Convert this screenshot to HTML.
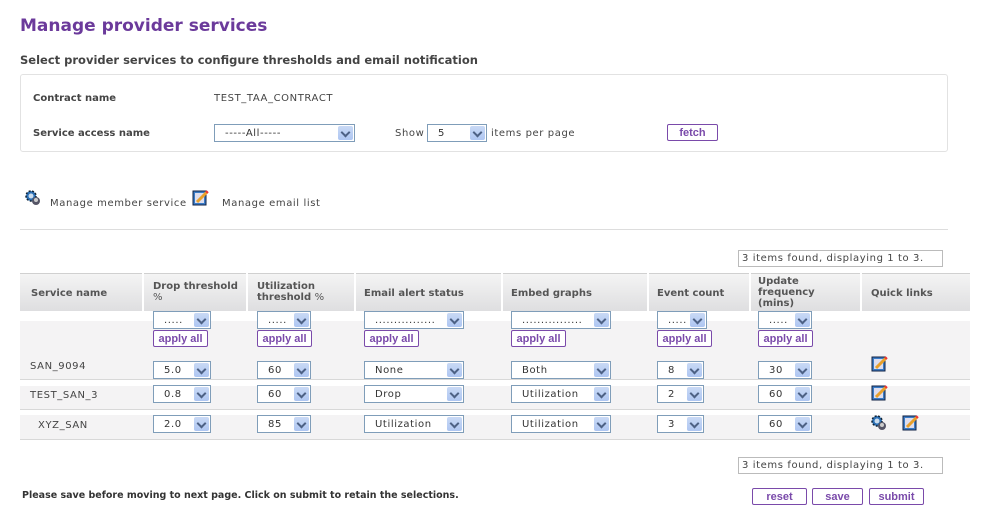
<!DOCTYPE html>
<html><head><style>
*{box-sizing:border-box;margin:0;padding:0}
body{width:989px;height:522px;background:#fff;font-family:"DejaVu Sans","Liberation Sans",sans-serif;font-size:10px;color:#444;position:relative;overflow:hidden;letter-spacing:.6px}
.a{position:absolute;white-space:nowrap}
.sel{position:absolute;height:18px;border:1px solid #7f9db9;background:#fff;font-size:10px;color:#333;line-height:17px;padding-left:10px}
.sel i{position:absolute;right:1px;top:1px;width:15px;height:14px;background:linear-gradient(#c9d9f5,#aec6f2);border-radius:2px}
.sel i:after{content:"";position:absolute;left:4px;top:3px;width:5px;height:5px;border-right:2px solid #4d6185;border-bottom:2px solid #4d6185;transform:rotate(45deg)}
.btn{position:absolute;height:17px;border:1px solid #7a4aaa;border-radius:2px;background:#fff;color:#7a4aaa;font-weight:bold;font-size:11px;text-align:center;line-height:16px;font-family:"Liberation Sans",sans-serif;letter-spacing:0}
.b{font-weight:bold;letter-spacing:0}
.hd{position:absolute;top:273px;height:38px;background:linear-gradient(#f4f4f4,#dedee0);border-top:1px solid #d0d0d0}
.th{position:absolute;font-weight:bold;color:#555;font-size:10px;line-height:11px;letter-spacing:0}
.ic{position:absolute;width:17px;height:17px}
</style></head><body>
<div class="a" style="left:20px;top:16px;font-size:17px;font-weight:bold;color:#6b3a9b;letter-spacing:0">Manage provider services</div>
<div class="a" style="left:20px;top:53px;font-size:11.5px;font-weight:bold;color:#444;letter-spacing:0">Select provider services to configure thresholds and email notification</div>
<div class="a" style="left:20px;top:74px;width:928px;height:78px;border:1px solid #e2e2e2;border-radius:3px"></div>
<div class="a b" style="left:33px;top:93px;color:#444">Contract name</div>
<div class="a" style="left:214px;top:93px;color:#444">TEST_TAA_CONTRACT</div>
<div class="a b" style="left:33px;top:128px;color:#444">Service access name</div>
<div class="sel" style="left:214px;top:124px;width:141px">-----All-----<i></i></div>
<div class="a" style="left:395px;top:128px">Show</div>
<div class="sel" style="left:427px;top:124px;width:60px">5<i></i></div>
<div class="a" style="left:491px;top:128px">items per page</div>
<div class="btn" style="left:667px;top:124px;width:51px">fetch</div>

<svg class="ic" style="left:24px;top:189px" viewBox="0 0 17 17"><circle cx="7" cy="7" r="5" fill="#2a6fb5" stroke="#123" stroke-width="1.5" stroke-dasharray="2 1.5"/><circle cx="7" cy="7" r="2.5" fill="#cde"/><circle cx="12" cy="12" r="4" fill="#556"/><circle cx="12" cy="11" r="2" fill="#ccc"/></svg>
<div class="a" style="left:50px;top:198px">Manage member service</div>
<svg class="ic" style="left:192px;top:189px" viewBox="0 0 17 17"><rect x="1" y="2" width="13" height="14" fill="#3a7cc7" stroke="#124" /><rect x="3" y="4" width="9" height="10" fill="#dde"/><path d="M5 13 L15 3" stroke="#e8a02a" stroke-width="3"/><path d="M14 2l2 2" stroke="#e33" stroke-width="2"/></svg>
<div class="a" style="left:222px;top:198px">Manage email list</div>
<div class="a" style="left:20px;top:229px;width:928px;height:1px;background:#ddd"></div>

<div class="a" style="left:738px;top:250px;width:205px;height:17px;border:1px solid #bbb;line-height:16px;padding-left:3px">3 items found, displaying 1 to 3.</div>

<div class="hd" style="left:20px;width:122px"></div>
<div class="hd" style="left:144px;width:102px"></div>
<div class="hd" style="left:248px;width:106px"></div>
<div class="hd" style="left:356px;width:145px"></div>
<div class="hd" style="left:503px;width:144px"></div>
<div class="hd" style="left:649px;width:100px"></div>
<div class="hd" style="left:751px;width:109px"></div>
<div class="hd" style="left:862px;width:108px"></div>
<div class="th" style="left:31px;top:288px">Service name</div>
<div class="th" style="left:153px;top:281px">Drop threshold<br><span style="font-weight:normal">%</span></div>
<div class="th" style="left:257px;top:281px">Utilization<br>threshold <span style="font-weight:normal">%</span></div>
<div class="th" style="left:364px;top:288px">Email alert status</div>
<div class="th" style="left:511px;top:288px">Embed graphs</div>
<div class="th" style="left:657px;top:288px">Event count</div>
<div class="th" style="left:758px;top:276px">Update<br>frequency<br>(mins)</div>
<div class="th" style="left:871px;top:288px">Quick links</div>

<div class="a" style="left:20px;top:321px;width:950px;height:34px;background:#f4f3f4"></div>
<div class="a" style="left:20px;top:355px;width:950px;height:24px;background:#f4f3f4"></div>
<div class="a" style="left:20px;top:379px;width:950px;height:1px;background:#d8d8d8"></div>
<div class="a" style="left:20px;top:386px;width:950px;height:23px;background:#f4f3f4"></div>
<div class="a" style="left:20px;top:409px;width:950px;height:1px;background:#d8d8d8"></div>
<div class="a" style="left:20px;top:415px;width:950px;height:24px;background:#f4f3f4"></div>
<div class="a" style="left:20px;top:439px;width:950px;height:1px;background:#d8d8d8"></div>

<div class="sel" style="left:153px;top:311px;width:58px">.....<i></i></div>
<div class="sel" style="left:257px;top:311px;width:54px">.....<i></i></div>
<div class="sel" style="left:364px;top:311px;width:100px">................<i></i></div>
<div class="sel" style="left:511px;top:311px;width:100px">................<i></i></div>
<div class="sel" style="left:657px;top:311px;width:50px">.....<i></i></div>
<div class="sel" style="left:758px;top:311px;width:54px">.....<i></i></div>
<div class="btn" style="left:153px;top:330px;width:55px">apply all</div>
<div class="btn" style="left:257px;top:330px;width:55px">apply all</div>
<div class="btn" style="left:364px;top:330px;width:55px">apply all</div>
<div class="btn" style="left:511px;top:330px;width:55px">apply all</div>
<div class="btn" style="left:657px;top:330px;width:55px">apply all</div>
<div class="btn" style="left:758px;top:330px;width:55px">apply all</div>

<div class="a" style="left:30px;top:361px">SAN_9094</div>
<div class="a" style="left:30px;top:390px">TEST_SAN_3</div>
<div class="a" style="left:38px;top:420px">XYZ_SAN</div>

<div class="sel" style="left:153px;top:361px;width:58px">5.0<i></i></div>
<div class="sel" style="left:257px;top:361px;width:54px">60<i></i></div>
<div class="sel" style="left:364px;top:361px;width:100px">None<i></i></div>
<div class="sel" style="left:511px;top:361px;width:100px">Both<i></i></div>
<div class="sel" style="left:657px;top:361px;width:47px">8<i></i></div>
<div class="sel" style="left:758px;top:361px;width:54px">30<i></i></div>

<div class="sel" style="left:153px;top:385px;width:58px">0.8<i></i></div>
<div class="sel" style="left:257px;top:385px;width:54px">60<i></i></div>
<div class="sel" style="left:364px;top:385px;width:100px">Drop<i></i></div>
<div class="sel" style="left:511px;top:385px;width:100px">Utilization<i></i></div>
<div class="sel" style="left:657px;top:385px;width:47px">2<i></i></div>
<div class="sel" style="left:758px;top:385px;width:54px">60<i></i></div>

<div class="sel" style="left:153px;top:415px;width:58px">2.0<i></i></div>
<div class="sel" style="left:257px;top:415px;width:54px">85<i></i></div>
<div class="sel" style="left:364px;top:415px;width:100px">Utilization<i></i></div>
<div class="sel" style="left:511px;top:415px;width:100px">Utilization<i></i></div>
<div class="sel" style="left:657px;top:415px;width:47px">3<i></i></div>
<div class="sel" style="left:758px;top:415px;width:54px">60<i></i></div>

<svg class="ic" style="left:871px;top:355px" viewBox="0 0 17 17"><rect x="1" y="2" width="13" height="14" fill="#3a7cc7" stroke="#124"/><rect x="3" y="4" width="9" height="10" fill="#dde"/><path d="M5 13 L15 3" stroke="#e8a02a" stroke-width="3"/><path d="M14 2l2 2" stroke="#e33" stroke-width="2"/></svg>
<svg class="ic" style="left:871px;top:384px" viewBox="0 0 17 17"><rect x="1" y="2" width="13" height="14" fill="#3a7cc7" stroke="#124"/><rect x="3" y="4" width="9" height="10" fill="#dde"/><path d="M5 13 L15 3" stroke="#e8a02a" stroke-width="3"/><path d="M14 2l2 2" stroke="#e33" stroke-width="2"/></svg>
<svg class="ic" style="left:870px;top:414px" viewBox="0 0 17 17"><circle cx="7" cy="7" r="5" fill="#2a6fb5" stroke="#123" stroke-width="1.5" stroke-dasharray="2 1.5"/><circle cx="7" cy="7" r="2.5" fill="#cde"/><circle cx="12" cy="12" r="4" fill="#556"/><circle cx="12" cy="11" r="2" fill="#ccc"/></svg>
<svg class="ic" style="left:902px;top:414px" viewBox="0 0 17 17"><rect x="1" y="2" width="13" height="14" fill="#3a7cc7" stroke="#124"/><rect x="3" y="4" width="9" height="10" fill="#dde"/><path d="M5 13 L15 3" stroke="#e8a02a" stroke-width="3"/><path d="M14 2l2 2" stroke="#e33" stroke-width="2"/></svg>

<div class="a" style="left:738px;top:457px;width:205px;height:17px;border:1px solid #bbb;line-height:16px;padding-left:3px">3 items found, displaying 1 to 3.</div>
<div class="a b" style="left:22px;top:490px;color:#333;font-size:9.5px">Please save before moving to next page. Click on submit to retain the selections.</div>
<div class="btn" style="left:752px;top:488px;width:55px">reset</div>
<div class="btn" style="left:812px;top:488px;width:51px">save</div>
<div class="btn" style="left:869px;top:488px;width:55px">submit</div>
</body></html>
